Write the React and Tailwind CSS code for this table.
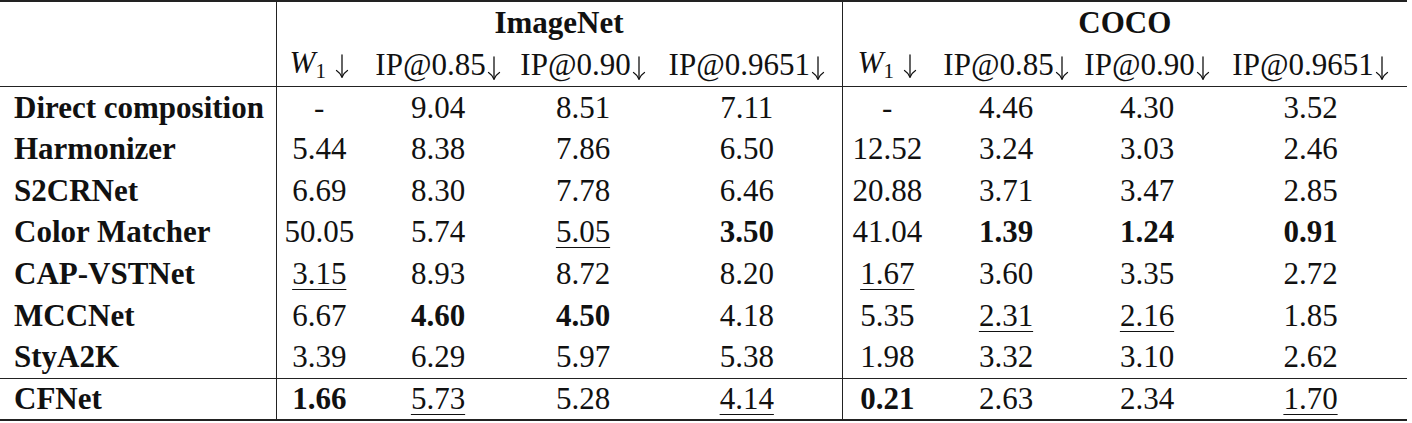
const rows = [
  ["Direct composition", "-", "9.04", "8.51", "7.11", "-", "4.46", "4.30", "3.52"],
  ["Harmonizer", "5.44", "8.38", "7.86", "6.50", "12.52", "3.24", "3.03", "2.46"],
  ["S2CRNet", "6.69", "8.30", "7.78", "6.46", "20.88", "3.71", "3.47", "2.85"],
  ["Color Matcher", "50.05", "5.74", "_5.05", "*3.50", "41.04", "*1.39", "*1.24", "*0.91"],
  ["CAP-VSTNet", "_3.15", "8.93", "8.72", "8.20", "_1.67", "3.60", "3.35", "2.72"],
  ["MCCNet", "6.67", "*4.60", "*4.50", "4.18", "5.35", "_2.31", "_2.16", "1.85"],
  ["StyA2K", "3.39", "6.29", "5.97", "5.38", "1.98", "3.32", "3.10", "2.62"],
];

const ours = ["CFNet", "*1.66", "_5.73", "5.28", "_4.14", "*0.21", "2.63", "2.34", "_1.70"];

const widths = ["w-[276px]", "w-[86px]", "w-[152px]", "w-[138px]", "w-[190px]", "w-[90px]", "w-[148px]", "w-[134px]", "w-[193px]"];

// "*" = best (bold), "_" = second best (underlined)
function Value({ v }) {
  if (v.startsWith("*")) return <span className="font-bold">{v.slice(1)}</span>;
  if (v.startsWith("_"))
    return <span className="underline decoration-1 underline-offset-[5px]">{v.slice(1)}</span>;
  return <span>{v}</span>;
}

function Down({ gap }) {
  return (
    <svg
      width="14"
      height="24"
      viewBox="0 0 14 24"
      className={"inline-block align-[-5px] " + (gap ? "ml-[9px]" : "ml-[1px]")}
      fill="none"
      stroke="#111"
      strokeWidth="1.3"
      strokeLinecap="round"
    >
      <path d="M7 1V23" />
      <path d="M1.5 16.5C3.8 18 5.6 20 7 23.2M12.5 16.5C10.2 18 8.4 20 7 23.2" />
    </svg>
  );
}

function W1() {
  return (
    <span className="whitespace-nowrap">
      <span className="italic">W</span>
      <span className="text-[21px] relative top-[5px]">1</span>
      <Down gap />
    </span>
  );
}

function Metric({ t }) {
  return (
    <span className="whitespace-nowrap">
      {t}
      <Down />
    </span>
  );
}

function Row({ cells, top }) {
  return (
    <tr className={"h-[41.7px] " + (top ? "border-t border-[#222]" : "")}>
      {cells.map((c, i) => (
        <td
          key={i}
          className={
            "p-0 " +
            (i === 0 ? "text-left pl-[14px] font-bold " : "text-center ") +
            (i === 0 || i === 4 ? "border-r border-[#222]" : "")
          }
        >
          {i === 0 ? c : <Value v={c} />}
        </td>
      ))}
    </tr>
  );
}

export default function App() {
  const metrics = ["IP@0.85", "IP@0.90", "IP@0.9651"];
  return (
    <div className="w-[1412px] h-[423px] bg-white text-[#111] font-['Liberation_Serif',serif] text-[31px] leading-[40px]">
      <table className="border-collapse table-fixed w-[1407px] border-t-2 border-b-2 border-[#222]">
        <colgroup>
          {widths.map((w, i) => (
            <col key={i} className={w} />
          ))}
        </colgroup>
        <thead>
          <tr className="h-[42px]">
            <th className="p-0 border-r border-[#222]"></th>
            <th colSpan={4} className="p-0 font-bold border-r border-[#222]">ImageNet</th>
            <th colSpan={4} className="p-0 font-bold">COCO</th>
          </tr>
          <tr className="h-[42px] border-b border-[#222]">
            <th className="p-0 border-r border-[#222]"></th>
            <th className="p-0 font-normal"><W1 /></th>
            {metrics.map((m) => (
              <th key={"a" + m} className="p-0 font-normal"><Metric t={m} /></th>
            ))}
            <th className="p-0 font-normal border-l border-[#222]"><W1 /></th>
            {metrics.map((m) => (
              <th key={"b" + m} className="p-0 font-normal"><Metric t={m} /></th>
            ))}
          </tr>
        </thead>
        <tbody>
          {rows.map((r) => (
            <Row key={r[0]} cells={r} />
          ))}
          <Row cells={ours} top />
        </tbody>
      </table>
    </div>
  );
}
